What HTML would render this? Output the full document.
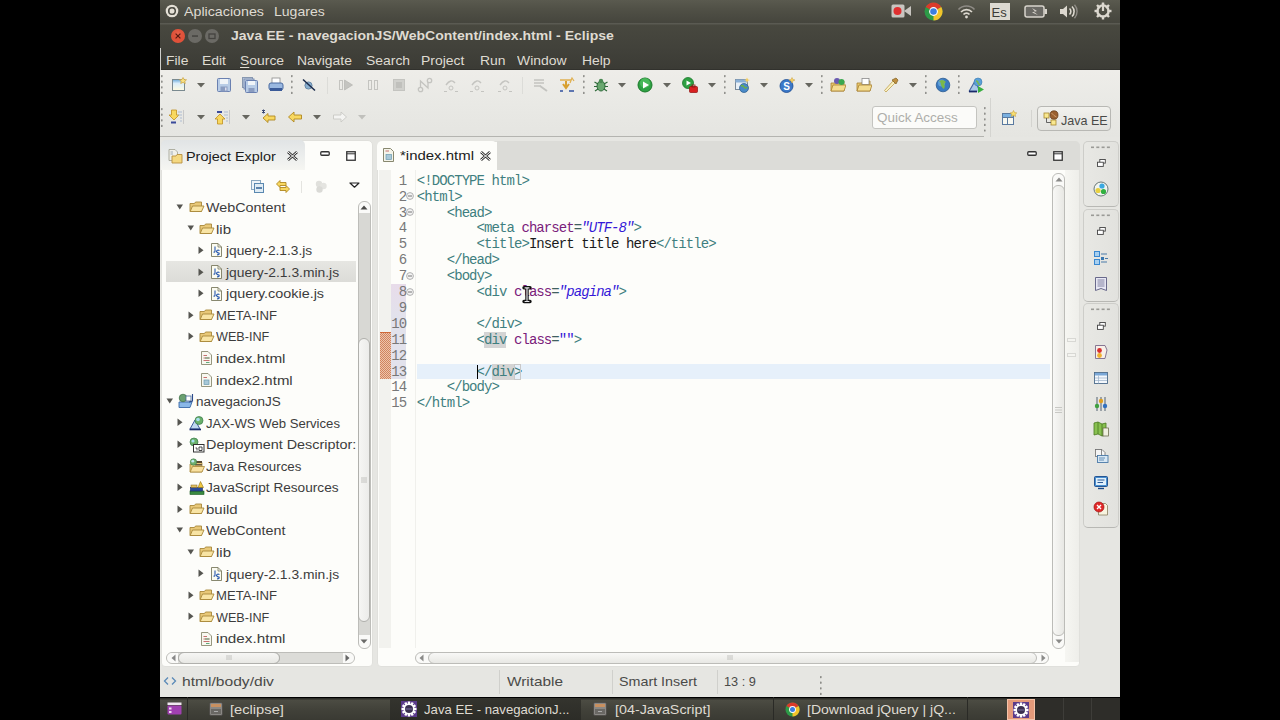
<!DOCTYPE html><html><head><meta charset="utf-8"><style>
*{margin:0;padding:0;box-sizing:border-box}
html,body{width:1280px;height:720px;overflow:hidden;background:#000;position:relative;font-family:"Liberation Sans",sans-serif}
.abs{position:absolute}
.t{position:absolute;white-space:pre;line-height:1}
#panel{left:160px;top:0;width:960px;height:23px;background:linear-gradient(#5a5a4f,#505046 40%,#45453d)}
#title{left:160px;top:23px;width:960px;height:46.5px;background:linear-gradient(#5a5a52 0,#5a5a52 1px,#48483f 2px,#42423b 50%,#3b3b35 97%,#2c2c28 100%)}
#menu{display:none}
#tb{left:160px;top:69.5px;width:960px;height:67px;background:linear-gradient(#eeede9,#e9e9e5 50%,#e5e5e1)}
#main{left:160px;top:137px;width:960px;height:560px;background:#e6e6e2}
#task{left:160px;top:697.5px;width:960px;height:22.5px;background:linear-gradient(#2e2e29 0,#2e2e29 1px,#4c4c43 2px,#42423a 50%,#3a3a33)}
.pt{color:#dfdbd2;font-size:13px}
.mt{color:#dfdbd2;font-size:13px}
.code{font-family:"Liberation Mono",monospace;font-size:14px;letter-spacing:-0.93px;color:#3f7f7f}
.ln{font-family:"Liberation Mono",monospace;font-size:14px;letter-spacing:-0.93px;color:#787878}
.tree{font-size:12.5px;color:#3c3c3c}
.st{font-size:13px;color:#4a4a48}
.tk{font-size:13px;color:#dfdbd2}
</style></head><body>
<div id="panel" class="abs"></div><div id="title" class="abs"></div><div id="menu" class="abs"></div>
<div id="tb" class="abs"></div><div id="main" class="abs"></div><div id="task" class="abs"></div>
<svg class="abs" style="left:165px;top:4.2px" width="14" height="14" viewBox="0 0 14 14"><circle cx="7" cy="7" r="6.3" fill="#e4e0d6"/><circle cx="7" cy="7" r="3.3" fill="none" stroke="#4a4a42" stroke-width="1.5"/><path d="M2.8 7 L4.4 6 L4.4 8 Z M9.3 3 L9.4 4.9 L7.9 4.1 Z M9.3 11 L7.9 9.9 L9.4 9.1 Z" fill="#4a4a42"/></svg>
<div class="t pt" style="left:184px;top:4.8px;transform:scaleX(1.095);transform-origin:0 0;">Aplicaciones</div>
<div class="t pt" style="left:273.5px;top:4.8px;transform:scaleX(1.08);transform-origin:0 0;">Lugares</div>
<svg class="abs" style="left:891px;top:4px" width="21" height="14" viewBox="0 0 21 14"><rect x="0.5" y="0.5" width="13" height="13" rx="1.5" fill="#c8c5c0"/><path d="M13 7 L20 2 L20 12 Z" fill="#c8c5c0"/><circle cx="6.5" cy="7" r="4" fill="#e03030"/></svg>
<svg class="abs" style="left:924px;top:2px" width="19" height="19" viewBox="0 0 19 19"><circle cx="9.5" cy="9.5" r="9" fill="#2d9a47"/><path d="M9.5 9.5 L1.7 5 A9 9 0 0 1 17.3 5 Z" fill="#db3a2b"/><path d="M9.5 9.5 L17.3 5 A9 9 0 0 1 9.5 18.5 Z" fill="#f2c32b"/><circle cx="9.5" cy="9.5" r="4.4" fill="#fff"/><circle cx="9.5" cy="9.5" r="3.3" fill="#3b7de0"/></svg>
<svg class="abs" style="left:957px;top:4px" width="19" height="15" viewBox="0 0 19 15"><path d="M1.5 5.5 A11 11 0 0 1 17.5 5.5" fill="none" stroke="#8e8b85" stroke-width="1.6"/><path d="M4 8 A7.5 7.5 0 0 1 15 8" fill="none" stroke="#dcd8cf" stroke-width="1.7"/><path d="M6.5 10.5 A4 4 0 0 1 12.5 10.5" fill="none" stroke="#dcd8cf" stroke-width="1.7"/><circle cx="9.5" cy="13" r="1.4" fill="#dcd8cf"/></svg>
<div class="abs" style="left:990px;top:3px;width:20px;height:17px;background:#dcd9d1"></div>
<div class="t " style="left:991.5px;top:5.5px;font-size:13px;color:#3c3b37">Es</div>
<svg class="abs" style="left:1024px;top:5px" width="24" height="13" viewBox="0 0 24 13"><rect x="1" y="1" width="19" height="11" rx="2" fill="#6a6964" stroke="#d8d4cc" stroke-width="1.5"/><rect x="20.5" y="4" width="2.5" height="5" fill="#d8d4cc"/><path d="M8 3 L13 6 L10 7 L14 10 L8 7.5 L11 6.5 Z" fill="#d8d4cc"/></svg>
<svg class="abs" style="left:1059px;top:4px" width="20" height="15" viewBox="0 0 20 15"><path d="M1 5 L4 5 L8 1.5 L8 13.5 L4 10 L1 10 Z" fill="#dcd8cf"/><path d="M10.5 4.5 A4 4 0 0 1 10.5 10.5" fill="none" stroke="#dcd8cf" stroke-width="1.6"/><path d="M13 2.5 A7 7 0 0 1 13 12.5" fill="none" stroke="#dcd8cf" stroke-width="1.6"/><path d="M15.5 0.8 A10 10 0 0 1 15.5 14.2" fill="none" stroke="#8e8b85" stroke-width="1.4"/></svg>
<svg class="abs" style="left:1094px;top:2px" width="18" height="18" viewBox="0 0 18 18"><rect x="7.8" y="0.5" width="2.4" height="4" fill="#dcd8cf" transform="rotate(0 9 9)"/><rect x="7.8" y="0.5" width="2.4" height="4" fill="#dcd8cf" transform="rotate(45 9 9)"/><rect x="7.8" y="0.5" width="2.4" height="4" fill="#dcd8cf" transform="rotate(90 9 9)"/><rect x="7.8" y="0.5" width="2.4" height="4" fill="#dcd8cf" transform="rotate(135 9 9)"/><rect x="7.8" y="0.5" width="2.4" height="4" fill="#dcd8cf" transform="rotate(180 9 9)"/><rect x="7.8" y="0.5" width="2.4" height="4" fill="#dcd8cf" transform="rotate(225 9 9)"/><rect x="7.8" y="0.5" width="2.4" height="4" fill="#dcd8cf" transform="rotate(270 9 9)"/><rect x="7.8" y="0.5" width="2.4" height="4" fill="#dcd8cf" transform="rotate(315 9 9)"/><circle cx="9" cy="9" r="5.6" fill="none" stroke="#dcd8cf" stroke-width="2.4"/><rect x="7.9" y="1" width="2.2" height="8" fill="#dcd8cf"/></svg>
<svg class="abs" style="left:170px;top:28px" width="50" height="16" viewBox="0 0 50 16"><circle cx="8" cy="8" r="7" fill="#e2523a"/><circle cx="8" cy="8" r="7" fill="url(#cg)"/><path d="M5.6 5.6 L10.4 10.4 M10.4 5.6 L5.6 10.4" stroke="#5a1a10" stroke-width="1.2"/><circle cx="25" cy="8" r="7" fill="#6b6a65"/><rect x="22" y="7.3" width="6" height="1.5" fill="#44433f"/><circle cx="42" cy="8" r="7" fill="#6b6a65"/><rect x="39" y="6" width="6" height="4.5" fill="none" stroke="#44433f" stroke-width="1.3"/><defs><radialGradient id="cg" cx="0.5" cy="0.35" r="0.6"><stop offset="0" stop-color="#f07058" stop-opacity="0.6"/><stop offset="1" stop-color="#c84028" stop-opacity="0"/></radialGradient></defs></svg>
<div class="t pt" style="left:231px;top:29.2px;transform:scaleX(1.08);transform-origin:0 0;font-weight:bold;color:#dfdbd2">Java EE - navegacionJS/WebContent/index.html - Eclipse</div>
<div class="t mt" style="left:166px;top:53.8px;transform:scaleX(1.07);transform-origin:0 0;">File</div>
<div class="t mt" style="left:201.5px;top:53.8px;transform:scaleX(1.07);transform-origin:0 0;">Edit</div>
<div class="t mt" style="left:239.5px;top:53.8px;transform:scaleX(1.07);transform-origin:0 0;"><u style="text-underline-offset:2px">S</u>ource</div>
<div class="t mt" style="left:296.5px;top:53.8px;transform:scaleX(1.07);transform-origin:0 0;">Navigate</div>
<div class="t mt" style="left:365.5px;top:53.8px;transform:scaleX(1.07);transform-origin:0 0;">Search</div>
<div class="t mt" style="left:420.5px;top:53.8px;transform:scaleX(1.07);transform-origin:0 0;">Project</div>
<div class="t mt" style="left:479.5px;top:53.8px;transform:scaleX(1.07);transform-origin:0 0;">Run</div>
<div class="t mt" style="left:516.5px;top:53.8px;transform:scaleX(1.07);transform-origin:0 0;">Window</div>
<div class="t mt" style="left:581.5px;top:53.8px;transform:scaleX(1.07);transform-origin:0 0;">Help</div>
<div class="abs" style="left:160px;top:48px;width:1px;height:22px;background:#cfcfcb"></div>
<svg class="abs" style="left:161.2px;top:75.3px" width="2" height="19" viewBox="0 0 2 19"><rect x="0" y="0.0" width="1.6" height="2.2" rx="0.6" fill="#8e8e8a"/><rect x="0" y="5.6" width="1.6" height="2.2" rx="0.6" fill="#8e8e8a"/><rect x="0" y="11.2" width="1.6" height="2.2" rx="0.6" fill="#8e8e8a"/><rect x="0" y="16.8" width="1.6" height="2.2" rx="0.6" fill="#8e8e8a"/></svg>
<svg class="abs" style="left:161.2px;top:107.8px" width="2" height="19" viewBox="0 0 2 19"><rect x="0" y="0.0" width="1.6" height="2.2" rx="0.6" fill="#8e8e8a"/><rect x="0" y="5.6" width="1.6" height="2.2" rx="0.6" fill="#8e8e8a"/><rect x="0" y="11.2" width="1.6" height="2.2" rx="0.6" fill="#8e8e8a"/><rect x="0" y="16.8" width="1.6" height="2.2" rx="0.6" fill="#8e8e8a"/></svg>
<svg class="abs" style="left:171px;top:77px" width="16" height="16" viewBox="0 0 16 16"><defs><linearGradient id="nw" x1="0" y1="0" x2="0" y2="1"><stop offset="0" stop-color="#6aa8d8"/><stop offset="0.35" stop-color="#dbeefa"/><stop offset="1" stop-color="#fffbe0"/></linearGradient></defs><rect x="1.5" y="2.5" width="12" height="11" fill="url(#nw)" stroke="#7a8a90"/><path d="M12 0.5 L13.2 2.6 L15.5 2.8 L13.8 4.3 L14.3 6.5 L12 5.4 L9.7 6.5 L10.2 4.3 L8.5 2.8 L10.8 2.6 Z" fill="#f8e080" stroke="#c8a040" stroke-width="0.7"/></svg>
<svg class="abs" style="left:196.5px;top:83px" width="8" height="5" viewBox="0 0 8 5"><path d="M0 0 L8 0 L4 4.5 Z" fill="#66665f"/></svg>
<svg class="abs" style="left:216px;top:77px" width="16" height="16" viewBox="0 0 16 16"><rect x="1.5" y="1.5" width="13" height="13" rx="1" fill="#b8cce6" stroke="#6a80b0"/><rect x="4" y="2" width="8" height="5" fill="#f0f4f8"/><rect x="4.5" y="9.5" width="7" height="5" fill="#8a9cc0"/><rect x="9" y="10.5" width="1.5" height="3" fill="#dde"/></svg>
<svg class="abs" style="left:242px;top:77px" width="16" height="16" viewBox="0 0 16 16"><rect x="0.5" y="0.5" width="10" height="10" fill="#c8d4e4" stroke="#8898b0"/><rect x="2" y="2" width="10" height="10" fill="#c0d0e4" stroke="#7a8cb0"/><rect x="3.5" y="3.5" width="12" height="12" rx="1" fill="#b8cce6" stroke="#6a80b0"/><rect x="6" y="4" width="7" height="4" fill="#f0f4f8"/><rect x="6.5" y="11" width="6" height="4" fill="#8a9cc0"/></svg>
<svg class="abs" style="left:268px;top:77px" width="16" height="16" viewBox="0 0 16 16"><rect x="4" y="1" width="8" height="6" fill="#fff" stroke="#8a8a8a" stroke-width="0.8"/><rect x="1" y="6" width="14" height="7" rx="2" fill="#9ab8e0" stroke="#4a6aa0"/><rect x="2" y="11" width="12" height="3" fill="#3a5a98"/></svg>
<svg class="abs" style="left:291.2px;top:75.3px" width="2" height="19" viewBox="0 0 2 19"><rect x="0" y="0.0" width="1.6" height="2.2" rx="0.6" fill="#8e8e8a"/><rect x="0" y="5.6" width="1.6" height="2.2" rx="0.6" fill="#8e8e8a"/><rect x="0" y="11.2" width="1.6" height="2.2" rx="0.6" fill="#8e8e8a"/><rect x="0" y="16.8" width="1.6" height="2.2" rx="0.6" fill="#8e8e8a"/></svg>
<svg class="abs" style="left:301px;top:77px" width="16" height="16" viewBox="0 0 16 16"><circle cx="7.5" cy="8.5" r="3.6" fill="#8ab0d0" stroke="#5a7a9a" stroke-width="0.8"/><path d="M2 2.5 L14 13.5" stroke="#1a2a4a" stroke-width="1.5"/></svg>
<div class="abs" style="left:327px;top:77px;width:1px;height:17px;background:#dcdcd8"></div>
<svg class="abs" style="left:338px;top:77px" width="16" height="16" viewBox="0 0 16 16"><rect x="1.5" y="3.5" width="3" height="9" fill="none" stroke="#c4c4c0"/><path d="M6.5 3 L14.5 8 L6.5 13 Z" fill="#c4c4c0" stroke="#b4b4b0" stroke-width="0.7"/></svg>
<svg class="abs" style="left:365px;top:77px" width="16" height="16" viewBox="0 0 16 16"><rect x="3.5" y="3.5" width="3" height="9" fill="none" stroke="#c4c4c0"/><rect x="9.5" y="3.5" width="3" height="9" fill="none" stroke="#c4c4c0"/></svg>
<svg class="abs" style="left:391px;top:77px" width="16" height="16" viewBox="0 0 16 16"><rect x="2.5" y="2.5" width="11" height="11" fill="#d0d0cc" stroke="#c4c4c0"/><rect x="5" y="5" width="6" height="6" fill="#c0c0bc"/></svg>
<svg class="abs" style="left:417px;top:77px" width="16" height="16" viewBox="0 0 16 16"><circle cx="3.5" cy="12.5" r="2.2" fill="none" stroke="#c4c4c0" stroke-width="1.3"/><circle cx="12.5" cy="3.5" r="2.2" fill="none" stroke="#c4c4c0" stroke-width="1.3"/><path d="M3.5 10 L3.5 4 L11 11 L11 5" fill="none" stroke="#c4c4c0" stroke-width="1.3"/></svg>
<svg class="abs" style="left:443px;top:77px" width="16" height="16" viewBox="0 0 16 16"><path d="M3 8 Q8 1 12 6" fill="none" stroke="#c4c4c0" stroke-width="1.4"/><circle cx="8" cy="11" r="2" fill="none" stroke="#c4c4c0"/><path d="M1 14.5 L4 14.5 M12 14.5 L15 14.5" stroke="#c4c4c0" stroke-width="1.2"/></svg>
<svg class="abs" style="left:469px;top:77px" width="16" height="16" viewBox="0 0 16 16"><path d="M3 8 Q8 1 12 6" fill="none" stroke="#c4c4c0" stroke-width="1.4"/><circle cx="8" cy="11" r="2" fill="none" stroke="#c4c4c0"/><path d="M1 14.5 L4 14.5 M12 14.5 L15 14.5" stroke="#c4c4c0" stroke-width="1.2"/></svg>
<svg class="abs" style="left:497px;top:77px" width="16" height="16" viewBox="0 0 16 16"><path d="M3 8 Q8 1 12 6" fill="none" stroke="#c4c4c0" stroke-width="1.4"/><circle cx="8" cy="11" r="2" fill="none" stroke="#c4c4c0"/><path d="M1 14.5 L4 14.5 M12 14.5 L15 14.5" stroke="#c4c4c0" stroke-width="1.2"/></svg>
<div class="abs" style="left:522px;top:77px;width:1px;height:17px;background:#dcdcd8"></div>
<svg class="abs" style="left:533px;top:77px" width="16" height="16" viewBox="0 0 16 16"><path d="M1 3 L11 3 M1 6 L11 6 M1 9 L8 9" stroke="#c4c4c0" stroke-width="1.6"/><path d="M7 9 L14 14" stroke="#c4c4c0" stroke-width="2"/></svg>
<svg class="abs" style="left:559px;top:77px" width="16" height="16" viewBox="0 0 16 16"><path d="M1 3 L12 3" stroke="#e0b050" stroke-width="1.5"/><path d="M7 4 L7 10 M4 7 L7 11 L10 7" stroke="#d8a030" stroke-width="2" fill="none"/><path d="M11 6 L13 1 L15 4" stroke="#e0b050" stroke-width="1.2" fill="none"/><path d="M1 14 L4 14 M10 14 L15 14" stroke="#3050a0" stroke-width="1.6"/></svg>
<svg class="abs" style="left:583.2px;top:75.3px" width="2" height="19" viewBox="0 0 2 19"><rect x="0" y="0.0" width="1.6" height="2.2" rx="0.6" fill="#8e8e8a"/><rect x="0" y="5.6" width="1.6" height="2.2" rx="0.6" fill="#8e8e8a"/><rect x="0" y="11.2" width="1.6" height="2.2" rx="0.6" fill="#8e8e8a"/><rect x="0" y="16.8" width="1.6" height="2.2" rx="0.6" fill="#8e8e8a"/></svg>
<svg class="abs" style="left:593px;top:77px" width="16" height="16" viewBox="0 0 16 16"><ellipse cx="8" cy="9" rx="4" ry="5" fill="#6aa870" stroke="#2e6a3a"/><circle cx="8" cy="4" r="2.2" fill="#4a8a54"/><path d="M1.5 5 L5 7 M14.5 5 L11 7 M1 9.5 L4 9.5 M15 9.5 L12 9.5 M2 14 L5 12 M14 14 L11 12" stroke="#2e6a3a" stroke-width="1.2"/></svg>
<svg class="abs" style="left:618px;top:83px" width="8" height="5" viewBox="0 0 8 5"><path d="M0 0 L8 0 L4 4.5 Z" fill="#66665f"/></svg>
<svg class="abs" style="left:637px;top:77px" width="16" height="16" viewBox="0 0 16 16"><circle cx="8" cy="8" r="7" fill="#2ea043" stroke="#1a7a2a"/><circle cx="8" cy="6" r="5" fill="#5ac86a" opacity="0.6"/><path d="M6 4.5 L12 8 L6 11.5 Z" fill="#fff"/></svg>
<svg class="abs" style="left:663px;top:83px" width="8" height="5" viewBox="0 0 8 5"><path d="M0 0 L8 0 L4 4.5 Z" fill="#66665f"/></svg>
<svg class="abs" style="left:682px;top:77px" width="16" height="16" viewBox="0 0 16 16"><circle cx="6" cy="6" r="5.5" fill="#2ea043" stroke="#1a7a2a" stroke-width="0.8"/><path d="M4.5 3.5 L9 6 L4.5 8.5 Z" fill="#fff"/><rect x="7.5" y="9.5" width="8" height="6" rx="1" fill="#d82020" stroke="#901010" stroke-width="0.7"/><rect x="10" y="8" width="3" height="2" fill="none" stroke="#901010" stroke-width="0.8"/></svg>
<svg class="abs" style="left:708px;top:83px" width="8" height="5" viewBox="0 0 8 5"><path d="M0 0 L8 0 L4 4.5 Z" fill="#66665f"/></svg>
<svg class="abs" style="left:724.2px;top:75.3px" width="2" height="19" viewBox="0 0 2 19"><rect x="0" y="0.0" width="1.6" height="2.2" rx="0.6" fill="#8e8e8a"/><rect x="0" y="5.6" width="1.6" height="2.2" rx="0.6" fill="#8e8e8a"/><rect x="0" y="11.2" width="1.6" height="2.2" rx="0.6" fill="#8e8e8a"/><rect x="0" y="16.8" width="1.6" height="2.2" rx="0.6" fill="#8e8e8a"/></svg>
<svg class="abs" style="left:734px;top:77px" width="16" height="16" viewBox="0 0 16 16"><rect x="1.5" y="2.5" width="12" height="10" fill="#e8f0f8" stroke="#7a8a9a"/><rect x="1.5" y="2.5" width="12" height="3" fill="#8ab0d8"/><circle cx="10" cy="11" r="4.5" fill="#4a8ac8" stroke="#2a5a8a" stroke-width="0.7"/><path d="M7 9 Q9 8 10 10 Q12 12 13 10" stroke="#6ab04a" stroke-width="1.6" fill="none"/><path d="M13 0.5 L14 2.5 L16 3 L14 3.8 L13 6 L12 3.8 L10 3 L12 2.5 Z" fill="#f8d060"/></svg>
<svg class="abs" style="left:759.6px;top:83px" width="8" height="5" viewBox="0 0 8 5"><path d="M0 0 L8 0 L4 4.5 Z" fill="#66665f"/></svg>
<svg class="abs" style="left:779px;top:77px" width="16" height="16" viewBox="0 0 16 16"><circle cx="7.5" cy="9" r="6.5" fill="#3a78c8" stroke="#1a4a90" stroke-width="0.8"/><text x="7.5" y="13" font-family="Liberation Sans" font-weight="bold" font-size="10" fill="#fff" text-anchor="middle">S</text><path d="M13 0.5 L14 2.5 L16 3 L14 3.8 L13 6 L12 3.8 L10 3 L12 2.5 Z" fill="#f8d060" stroke="#c8a040" stroke-width="0.5"/></svg>
<svg class="abs" style="left:805px;top:83px" width="8" height="5" viewBox="0 0 8 5"><path d="M0 0 L8 0 L4 4.5 Z" fill="#66665f"/></svg>
<svg class="abs" style="left:821.2px;top:75.3px" width="2" height="19" viewBox="0 0 2 19"><rect x="0" y="0.0" width="1.6" height="2.2" rx="0.6" fill="#8e8e8a"/><rect x="0" y="5.6" width="1.6" height="2.2" rx="0.6" fill="#8e8e8a"/><rect x="0" y="11.2" width="1.6" height="2.2" rx="0.6" fill="#8e8e8a"/><rect x="0" y="16.8" width="1.6" height="2.2" rx="0.6" fill="#8e8e8a"/></svg>
<svg class="abs" style="left:830px;top:77px" width="16" height="16" viewBox="0 0 16 16"><path d="M1 6 L6 6 L7 4 L14 4 L14 14 L1 14 Z" fill="#e8c870" stroke="#a88030" stroke-width="0.8"/><path d="M1 14 L3 8 L16 8 L14 14 Z" fill="#f4dc90" stroke="#a88030" stroke-width="0.8"/><circle cx="7" cy="4" r="3" fill="#6a5ab0"/><circle cx="11.5" cy="5" r="3" fill="#3aa850"/></svg>
<svg class="abs" style="left:856px;top:77px" width="16" height="16" viewBox="0 0 16 16"><path d="M1 6 L6 6 L7 4 L14 4 L14 14 L1 14 Z" fill="#e8c870" stroke="#a88030" stroke-width="0.8"/><rect x="6" y="1.5" width="7" height="6" fill="#fff" stroke="#8a8a8a" stroke-width="0.8"/><path d="M1 14 L3 8 L16 8 L14 14 Z" fill="#f4dc90" stroke="#a88030" stroke-width="0.8"/></svg>
<svg class="abs" style="left:883px;top:77px" width="16" height="16" viewBox="0 0 16 16"><path d="M3 15 L1.5 13.5 L10 4 L12 6 Z" fill="#f8f0c0" stroke="#c0a050" stroke-width="0.8"/><path d="M9 3 L13 1 L15 3 L13 7 Z" fill="#c09040" stroke="#806020" stroke-width="0.7"/></svg>
<svg class="abs" style="left:909px;top:83px" width="8" height="5" viewBox="0 0 8 5"><path d="M0 0 L8 0 L4 4.5 Z" fill="#66665f"/></svg>
<svg class="abs" style="left:925.2px;top:75.3px" width="2" height="19" viewBox="0 0 2 19"><rect x="0" y="0.0" width="1.6" height="2.2" rx="0.6" fill="#8e8e8a"/><rect x="0" y="5.6" width="1.6" height="2.2" rx="0.6" fill="#8e8e8a"/><rect x="0" y="11.2" width="1.6" height="2.2" rx="0.6" fill="#8e8e8a"/><rect x="0" y="16.8" width="1.6" height="2.2" rx="0.6" fill="#8e8e8a"/></svg>
<svg class="abs" style="left:935px;top:77px" width="16" height="16" viewBox="0 0 16 16"><circle cx="8" cy="8" r="6.8" fill="#3a7ac0" stroke="#2a5a90" stroke-width="0.8"/><circle cx="6.5" cy="6" r="3.5" fill="#8ac8f0" opacity="0.5"/><path d="M4 4 Q6 5 6 8 Q7 11 9 12 L10 9 Q8 7 11 5 Q9 3 7 3" fill="#7ab84a"/></svg>
<svg class="abs" style="left:958.2px;top:75.3px" width="2" height="19" viewBox="0 0 2 19"><rect x="0" y="0.0" width="1.6" height="2.2" rx="0.6" fill="#8e8e8a"/><rect x="0" y="5.6" width="1.6" height="2.2" rx="0.6" fill="#8e8e8a"/><rect x="0" y="11.2" width="1.6" height="2.2" rx="0.6" fill="#8e8e8a"/><rect x="0" y="16.8" width="1.6" height="2.2" rx="0.6" fill="#8e8e8a"/></svg>
<svg class="abs" style="left:968px;top:77px" width="16" height="16" viewBox="0 0 16 16"><path d="M1 14.5 L7 4 L12 14.5" fill="#a8c8e8" stroke="#4a6aa0" stroke-width="1.2"/><path d="M1 14.5 L9 14.5" stroke="#1a2a6a" stroke-width="1.8"/><circle cx="10" cy="5" r="4" fill="#5aa0d8" stroke="#3a7ab0" stroke-width="0.6"/><path d="M8 4 Q10 4 10 6 Q11 8 12 7" stroke="#7ab84a" stroke-width="1.4" fill="none"/><path d="M10 9 L16 12.5 L10 16 Z" fill="#3ab040"/></svg>
<svg class="abs" style="left:168px;top:109px" width="16" height="16" viewBox="0 0 16 16"><path d="M3.5 1 L8.5 1 L8.5 6 L11 6 L6 11 L1 6 L3.5 6 Z" fill="#f8d860" stroke="#c09020" stroke-width="0.8"/><path d="M10 3 L14 3 M10 6 L14 6 M12 9 L14 9 M12 12 L14 12" stroke="#a8b8d0" stroke-width="0.9"/><rect x="3" y="12.5" width="5" height="2" fill="#3a4a9a"/><path d="M15.5 1 L15.5 15" stroke="#c8c8c8"/></svg>
<svg class="abs" style="left:196.5px;top:115px" width="8" height="5" viewBox="0 0 8 5"><path d="M0 0 L8 0 L4 4.5 Z" fill="#66665f"/></svg>
<svg class="abs" style="left:214px;top:109px" width="16" height="16" viewBox="0 0 16 16"><path d="M3.5 15 L8.5 15 L8.5 10 L11 10 L6 5 L1 10 L3.5 10 Z" fill="#f8d860" stroke="#c09020" stroke-width="0.8"/><path d="M10 3 L14 3 M10 6 L14 6 M12 9 L14 9 M12 12 L14 12" stroke="#a8b8d0" stroke-width="0.9"/><rect x="3" y="2" width="5" height="2" fill="#3a4a9a"/><path d="M15.5 1 L15.5 15" stroke="#c8c8c8"/></svg>
<svg class="abs" style="left:241.75px;top:115px" width="8" height="5" viewBox="0 0 8 5"><path d="M0 0 L8 0 L4 4.5 Z" fill="#66665f"/></svg>
<svg class="abs" style="left:261px;top:109px" width="16" height="16" viewBox="0 0 16 16"><path d="M2 9 L7 4.5 L7 7 L14 7 L14 11 L7 11 L7 13.5 Z" fill="#f8d860" stroke="#b08820" stroke-width="0.9"/><path d="M1 1 L4 4 M4 1 L1 4 M2.5 0.5 L2.5 4.5" stroke="#2a3a6a" stroke-width="0.9"/></svg>
<svg class="abs" style="left:287px;top:109px" width="16" height="16" viewBox="0 0 16 16"><path d="M1.5 8 L7 3 L7 6 L14.5 6 L14.5 10 L7 10 L7 13 Z" fill="#f8d860" stroke="#b08820" stroke-width="0.9"/></svg>
<svg class="abs" style="left:313px;top:115px" width="8" height="5" viewBox="0 0 8 5"><path d="M0 0 L8 0 L4 4.5 Z" fill="#66665f"/></svg>
<svg class="abs" style="left:332px;top:109px" width="16" height="16" viewBox="0 0 16 16"><path d="M14.5 8 L9 3 L9 6 L1.5 6 L1.5 10 L9 10 L9 13 Z" fill="#f4f4f2" stroke="#c8c8c4" stroke-width="0.9"/></svg>
<svg class="abs" style="left:358px;top:115px" width="8" height="5" viewBox="0 0 8 5"><path d="M0 0 L8 0 L4 4.5 Z" fill="#c0c0bc"/></svg>
<div class="abs" style="left:872px;top:106px;width:105px;height:23px;background:#fbfbf9;border:1px solid #c4c4c0;border-radius:3px"></div>
<div class="t " style="left:876.5px;top:111px;transform:scaleX(1.035);transform-origin:0 0;font-size:13px;color:#aeaeaa">Quick Access</div>
<div class="abs" style="left:160px;top:136px;width:824px;height:1px;background:#b4b4b0"></div>
<svg class="abs" style="left:984.2px;top:106.5px" width="2" height="25" viewBox="0 0 2 25"><rect x="0" y="0.0" width="1.6" height="2.2" rx="0.6" fill="#8e8e8a"/><rect x="0" y="5.6" width="1.6" height="2.2" rx="0.6" fill="#8e8e8a"/><rect x="0" y="11.2" width="1.6" height="2.2" rx="0.6" fill="#8e8e8a"/><rect x="0" y="16.8" width="1.6" height="2.2" rx="0.6" fill="#8e8e8a"/><rect x="0" y="22.4" width="1.6" height="2.2" rx="0.6" fill="#8e8e8a"/></svg>
<div class="abs" style="left:990px;top:98px;width:1px;height:39px;background:#d4d4d0"></div>
<svg class="abs" style="left:1001px;top:110px" width="16" height="16" viewBox="0 0 16 16"><rect x="1.5" y="3.5" width="11" height="11" fill="#f8f8f0" stroke="#5a7aa0"/><path d="M1.5 7.5 L12.5 7.5 M6.5 7.5 L6.5 14.5" stroke="#5a7aa0"/><rect x="2" y="4" width="10" height="3" fill="#7ab0e0"/><path d="M12.5 0.5 L13.6 2.6 L15.8 2.9 L14.2 4.3 L14.6 6.5 L12.5 5.4 L10.4 6.5 L10.8 4.3 L9.2 2.9 L11.4 2.6 Z" fill="#f8e070" stroke="#c8a040" stroke-width="0.6"/></svg>
<div class="abs" style="left:1030.6px;top:110px;width:1px;height:17px;background:#d4d4d0"></div>
<div class="abs" style="left:1037px;top:106px;width:73.5px;height:24.7px;background:linear-gradient(#f2f2ee,#e2e2de);border:1px solid #b8b8b4;border-radius:4px"></div>
<svg class="abs" style="left:1043px;top:110px" width="16" height="16" viewBox="0 0 16 16"><rect x="1" y="3" width="5" height="5" fill="#f8e890" stroke="#a88830" stroke-width="0.8"/><rect x="8" y="10" width="5" height="5" fill="#f8e890" stroke="#a88830" stroke-width="0.8"/><path d="M3.5 8 L3.5 12.5 L8 12.5" stroke="#555" stroke-width="0.9" fill="none"/><ellipse cx="11" cy="5" rx="4" ry="4.2" fill="#9a6030" stroke="#603818" stroke-width="0.7"/><path d="M8.5 3 Q11 6 13.5 7" stroke="#d8a878" stroke-width="0.8" fill="none"/></svg>
<div class="t " style="left:1061px;top:113.8px;transform:scaleX(0.965);transform-origin:0 0;font-size:13px;color:#4a4a48">Java EE</div>
<div class="abs" style="left:161px;top:140px;width:212px;height:526.5px;background:#fdfdfa;border:1px solid #e0e0dc;border-radius:5px 5px 4px 4px"></div>
<div class="abs" style="left:161px;top:140px;width:143.5px;height:30px;background:linear-gradient(#e1e4e5,#eceeed 55%,#f6f6f2);border-radius:5px 5px 0 0"></div>
<svg class="abs" style="left:167px;top:148px" width="16" height="16" viewBox="0 0 16 16"><path d="M2 1.5 L8 1.5 L10.5 4 L10.5 12.5 L2 12.5 Z" fill="#f0f0ea" stroke="#a0a090" stroke-width="0.8"/><path d="M3.5 4 L6 4 M3.5 6 L6 6" stroke="#8090a0" stroke-width="0.7"/><path d="M5 8 L9 8 L10 6.5 L15 6.5 L15 15 L5 15 Z" fill="#f4d880" stroke="#b89040" stroke-width="0.9"/></svg>
<div class="t " style="left:185.8px;top:149.6px;transform:scaleX(1.11);transform-origin:0 0;font-size:13px;color:#1c1c1c">Project Explor</div>
<svg class="abs" style="left:287px;top:151px" width="11" height="10" viewBox="0 0 11 10"><path d="M1 1 L10 9 M10 1 L1 9" stroke="#333" stroke-width="2.6"/><path d="M1 1 L10 9 M10 1 L1 9" stroke="#fff" stroke-width="1"/></svg>
<svg class="abs" style="left:320px;top:150.5px" width="10" height="5" viewBox="0 0 10 5"><rect x="0.75" y="0.75" width="8.5" height="3.5" rx="1" fill="#fff" stroke="#333" stroke-width="1.3"/></svg>
<svg class="abs" style="left:346px;top:150.5px" width="10" height="10" viewBox="0 0 10 10"><rect x="0.75" y="0.75" width="8.5" height="8.5" fill="#fff" stroke="#333" stroke-width="1.3"/><path d="M1 2.8 L9 2.8" stroke="#333" stroke-width="1"/></svg>
<svg class="abs" style="left:250px;top:179px" width="15" height="15" viewBox="0 0 15 15"><rect x="1.5" y="1.5" width="9" height="9" fill="#eef4f8" stroke="#8aa8c0"/><rect x="4.5" y="4.5" width="9" height="9" fill="#e0ecf4" stroke="#5a88b0"/><path d="M6 9 L12 9" stroke="#3a6a9a" stroke-width="1.6"/></svg>
<svg class="abs" style="left:275px;top:179px" width="16" height="15" viewBox="0 0 16 15"><path d="M1.5 5 L5 1.5 L5 3.5 L11 3.5 L11 6.5 L5 6.5 L5 8.5 Z" fill="#f8d860" stroke="#b08820" stroke-width="0.9"/><path d="M14.5 10 L11 6.5 L11 8.5 L5 8.5 L5 11.5 L11 11.5 L11 13.5 Z" fill="#f8d860" stroke="#b08820" stroke-width="0.9"/></svg>
<div class="abs" style="left:301px;top:181px;width:1px;height:12px;background:#e4e4e0"></div>
<svg class="abs" style="left:313px;top:179px" width="15" height="15" viewBox="0 0 15 15"><circle cx="6" cy="5" r="3.2" fill="#e0e0dc"/><circle cx="10.5" cy="7" r="3.2" fill="#e4e4e0"/><circle cx="6.5" cy="10.5" r="3.2" fill="#dadad6"/></svg>
<svg class="abs" style="left:348.5px;top:181.5px" width="11" height="6" viewBox="0 0 11 6"><path d="M1 1 L10 1 L5.5 5.2 Z" fill="#fff" stroke="#222" stroke-width="1.2" stroke-linejoin="round"/></svg>
<div class="abs" style="left:165.5px;top:260.5px;width:190px;height:21px;background:linear-gradient(#e6e6e2,#dcdcd8)"></div>
<div class="abs" style="left:162px;top:196px;width:194px;height:455px;overflow:hidden">
<svg class="abs" style="left:14.3px;top:7.8px" width="8" height="6"><path d="M0.5 0.5 L7 0.5 L3.75 5.5 Z" fill="#555550"/></svg>
<svg class="abs" style="left:26.5px;top:3.3px" width="16" height="16"><path d="M1 4.5 L5.5 4.5 L6.5 3 L12.5 3 L12.5 12.5 L1 12.5 Z" fill="#e8c878" stroke="#a8883a" stroke-width="0.9"/><path d="M1.2 12.5 L3.5 7 L15 7 L12.5 12.5 Z" fill="#f8e4a4" stroke="#a8883a" stroke-width="0.9"/></svg>
<div class="t tree" style="left:43.8px;top:6.0px;transform:scaleX(1.146);transform-origin:0 0">WebContent</div>
<svg class="abs" style="left:24.6px;top:29.4px" width="8" height="6"><path d="M0.5 0.5 L7 0.5 L3.75 5.5 Z" fill="#555550"/></svg>
<svg class="abs" style="left:36.8px;top:24.9px" width="16" height="16"><path d="M1 4.5 L5.5 4.5 L6.5 3 L12.5 3 L12.5 12.5 L1 12.5 Z" fill="#e8c878" stroke="#a8883a" stroke-width="0.9"/><path d="M1.2 12.5 L3.5 7 L15 7 L12.5 12.5 Z" fill="#f8e4a4" stroke="#a8883a" stroke-width="0.9"/></svg>
<div class="t tree" style="left:54.1px;top:27.6px;transform:scaleX(1.2);transform-origin:0 0">lib</div>
<svg class="abs" style="left:35.9px;top:49.9px" width="6" height="9"><path d="M0.5 0.5 L5.5 4.25 L0.5 8 Z" fill="#555550"/></svg>
<svg class="abs" style="left:47.1px;top:46.4px" width="16" height="16"><path d="M2.5 1.5 L9 1.5 L12.5 5 L12.5 14.5 L2.5 14.5 Z" fill="#fbfbf0" stroke="#7a7a60" stroke-width="0.9"/><path d="M9 1.5 L9 5 L12.5 5" fill="none" stroke="#7a7a60" stroke-width="0.8"/><path d="M6 4.5 L6 9 Q6 10.5 4.5 10" stroke="#2a5ab0" stroke-width="1.1" fill="none"/><path d="M10.5 8.5 Q8 7.5 7.5 9.5 Q8 11 10 11 Q11 12.5 8 13" stroke="#2a5ab0" stroke-width="1.1" fill="none"/></svg>
<div class="t tree" style="left:64.4px;top:49.1px;transform:scaleX(1.097);transform-origin:0 0">jquery-2.1.3.js</div>
<svg class="abs" style="left:35.9px;top:71.5px" width="6" height="9"><path d="M0.5 0.5 L5.5 4.25 L0.5 8 Z" fill="#555550"/></svg>
<svg class="abs" style="left:47.1px;top:68.0px" width="16" height="16"><path d="M2.5 1.5 L9 1.5 L12.5 5 L12.5 14.5 L2.5 14.5 Z" fill="#fbfbf0" stroke="#7a7a60" stroke-width="0.9"/><path d="M9 1.5 L9 5 L12.5 5" fill="none" stroke="#7a7a60" stroke-width="0.8"/><path d="M6 4.5 L6 9 Q6 10.5 4.5 10" stroke="#2a5ab0" stroke-width="1.1" fill="none"/><path d="M10.5 8.5 Q8 7.5 7.5 9.5 Q8 11 10 11 Q11 12.5 8 13" stroke="#2a5ab0" stroke-width="1.1" fill="none"/></svg>
<div class="t tree" style="left:64.4px;top:70.7px;transform:scaleX(1.107);transform-origin:0 0">jquery-2.1.3.min.js</div>
<svg class="abs" style="left:35.9px;top:93.0px" width="6" height="9"><path d="M0.5 0.5 L5.5 4.25 L0.5 8 Z" fill="#555550"/></svg>
<svg class="abs" style="left:47.1px;top:89.5px" width="16" height="16"><path d="M2.5 1.5 L9 1.5 L12.5 5 L12.5 14.5 L2.5 14.5 Z" fill="#fbfbf0" stroke="#7a7a60" stroke-width="0.9"/><path d="M9 1.5 L9 5 L12.5 5" fill="none" stroke="#7a7a60" stroke-width="0.8"/><path d="M6 4.5 L6 9 Q6 10.5 4.5 10" stroke="#2a5ab0" stroke-width="1.1" fill="none"/><path d="M10.5 8.5 Q8 7.5 7.5 9.5 Q8 11 10 11 Q11 12.5 8 13" stroke="#2a5ab0" stroke-width="1.1" fill="none"/></svg>
<div class="t tree" style="left:64.4px;top:92.2px;transform:scaleX(1.15);transform-origin:0 0">jquery.cookie.js</div>
<svg class="abs" style="left:25.6px;top:114.6px" width="6" height="9"><path d="M0.5 0.5 L5.5 4.25 L0.5 8 Z" fill="#555550"/></svg>
<svg class="abs" style="left:36.8px;top:111.1px" width="16" height="16"><path d="M1 4.5 L5.5 4.5 L6.5 3 L12.5 3 L12.5 12.5 L1 12.5 Z" fill="#e8c878" stroke="#a8883a" stroke-width="0.9"/><path d="M1.2 12.5 L3.5 7 L15 7 L12.5 12.5 Z" fill="#f8e4a4" stroke="#a8883a" stroke-width="0.9"/></svg>
<div class="t tree" style="left:54.1px;top:113.8px;transform:scaleX(1.05);transform-origin:0 0">META-INF</div>
<svg class="abs" style="left:25.6px;top:136.2px" width="6" height="9"><path d="M0.5 0.5 L5.5 4.25 L0.5 8 Z" fill="#555550"/></svg>
<svg class="abs" style="left:36.8px;top:132.7px" width="16" height="16"><path d="M1 4.5 L5.5 4.5 L6.5 3 L12.5 3 L12.5 12.5 L1 12.5 Z" fill="#e8c878" stroke="#a8883a" stroke-width="0.9"/><path d="M1.2 12.5 L3.5 7 L15 7 L12.5 12.5 Z" fill="#f8e4a4" stroke="#a8883a" stroke-width="0.9"/></svg>
<div class="t tree" style="left:54.1px;top:135.4px;transform:scaleX(1.01);transform-origin:0 0">WEB-INF</div>
<svg class="abs" style="left:36.8px;top:154.2px" width="16" height="16"><path d="M2.5 1.5 L9 1.5 L12.5 5 L12.5 14.5 L2.5 14.5 Z" fill="#f8f8f0" stroke="#8a8a70" stroke-width="0.9"/><path d="M4.5 5.5 L8 5.5 M4.5 8 L10.5 8 M4.5 10.5 L10.5 10.5" stroke="#c06060" stroke-width="0.9"/><path d="M6 8 L10.5 8 M7 12.5 L10.5 12.5" stroke="#50a070" stroke-width="0.9"/></svg>
<div class="t tree" style="left:54.1px;top:156.9px;transform:scaleX(1.22);transform-origin:0 0">index.html</div>
<svg class="abs" style="left:36.8px;top:175.8px" width="16" height="16"><path d="M2.5 1.5 L9 1.5 L12.5 5 L12.5 14.5 L2.5 14.5 Z" fill="#f8f8f0" stroke="#8a8a70" stroke-width="0.9"/><path d="M4.5 5.5 L8 5.5" stroke="#c06060" stroke-width="0.9"/><rect x="5" y="8" width="5" height="4.5" fill="#a8c8d8" stroke="#6a9ab0" stroke-width="0.7"/></svg>
<div class="t tree" style="left:54.1px;top:178.5px;transform:scaleX(1.2);transform-origin:0 0">index2.html</div>
<svg class="abs" style="left:4.0px;top:201.8px" width="8" height="6"><path d="M0.5 0.5 L7 0.5 L3.75 5.5 Z" fill="#555550"/></svg>
<svg class="abs" style="left:16.2px;top:197.3px" width="16" height="16"><path d="M1 9 L14 9 L12 14.5 L1 14.5 Z" fill="#8ab8e8" stroke="#3a6aa8" stroke-width="0.9"/><circle cx="5" cy="5" r="3.8" fill="#6aa070" stroke="#3a6a40" stroke-width="0.7"/><rect x="8" y="3" width="5" height="5" fill="#fff" stroke="#4a6a9a" stroke-width="0.8"/><path d="M14.5 1 L14.5 8 L11 9" stroke="#2a4a8a" stroke-width="1.1" fill="none"/></svg>
<div class="t tree" style="left:33.5px;top:200.0px;transform:scaleX(1.08);transform-origin:0 0">navegacionJS</div>
<svg class="abs" style="left:15.3px;top:222.4px" width="6" height="9"><path d="M0.5 0.5 L5.5 4.25 L0.5 8 Z" fill="#555550"/></svg>
<svg class="abs" style="left:26.5px;top:218.9px" width="16" height="16"><path d="M1 14 L6 5 L11 14 Z" fill="#c0d8f0" stroke="#3a5a9a" stroke-width="1"/><path d="M0.5 14.5 L12 14.5" stroke="#1a2a6a" stroke-width="1.6"/><circle cx="10" cy="5.5" r="4" fill="#6ab06a" stroke="#3a7a4a" stroke-width="0.7"/><circle cx="9" cy="4.5" r="1.8" fill="#a8e0f0"/></svg>
<div class="t tree" style="left:43.8px;top:221.6px;transform:scaleX(1.05);transform-origin:0 0">JAX-WS Web Services</div>
<svg class="abs" style="left:15.3px;top:244.0px" width="6" height="9"><path d="M0.5 0.5 L5.5 4.25 L0.5 8 Z" fill="#555550"/></svg>
<svg class="abs" style="left:26.5px;top:240.5px" width="16" height="16"><circle cx="5" cy="5" r="4" fill="#6ab06a" stroke="#3a7a4a" stroke-width="0.7"/><circle cx="4" cy="4" r="1.6" fill="#a8e0f0"/><rect x="4.5" y="7.5" width="10.5" height="7.5" fill="#fff" stroke="#333" stroke-width="1"/><path d="M6.5 11 L8 11 L8 13.5 M10 10 L13 10 L13 13.5 L10 13.5 Z" stroke="#333" stroke-width="0.9" fill="none"/></svg>
<div class="t tree" style="left:43.8px;top:243.2px;transform:scaleX(1.15);transform-origin:0 0">Deployment Descriptor: navegacionJS</div>
<svg class="abs" style="left:15.3px;top:265.5px" width="6" height="9"><path d="M0.5 0.5 L5.5 4.25 L0.5 8 Z" fill="#555550"/></svg>
<svg class="abs" style="left:26.5px;top:262.0px" width="16" height="16"><path d="M1 6 L5 6 L6 4.5 L13 4.5 L13 14 L1 14 Z" fill="#e8c878" stroke="#a8883a" stroke-width="0.8"/><path d="M1.2 14 L3.5 8.5 L15.5 8.5 L13 14 Z" fill="#f8e0a0" stroke="#a8883a" stroke-width="0.8"/><rect x="6" y="3" width="7" height="2" fill="#5a4a30"/><rect x="6" y="6" width="7" height="1.5" fill="#6a5a40"/><circle cx="4.5" cy="4" r="3.2" fill="#70b070" stroke="#3a7a4a" stroke-width="0.6"/><circle cx="3.8" cy="3.2" r="1.4" fill="#c0e8f0"/></svg>
<div class="t tree" style="left:43.8px;top:264.7px;transform:scaleX(1.064);transform-origin:0 0">Java Resources</div>
<svg class="abs" style="left:15.3px;top:287.1px" width="6" height="9"><path d="M0.5 0.5 L5.5 4.25 L0.5 8 Z" fill="#555550"/></svg>
<svg class="abs" style="left:26.5px;top:283.6px" width="16" height="16"><rect x="1" y="11" width="14" height="3.5" fill="#3a8a40" stroke="#1a5a20" stroke-width="0.6"/><rect x="1.5" y="7.5" width="12" height="3.5" fill="#2a4a9a" stroke="#1a2a6a" stroke-width="0.6"/><path d="M9 7.5 L11.5 1.5 L14.5 7.5 Z" fill="#f0c840" stroke="#907010" stroke-width="0.6"/><rect x="2" y="5" width="6" height="2.5" fill="#e0c060" stroke="#806020" stroke-width="0.5"/></svg>
<div class="t tree" style="left:43.8px;top:286.3px;transform:scaleX(1.09);transform-origin:0 0">JavaScript Resources</div>
<svg class="abs" style="left:15.3px;top:308.6px" width="6" height="9"><path d="M0.5 0.5 L5.5 4.25 L0.5 8 Z" fill="#555550"/></svg>
<svg class="abs" style="left:26.5px;top:305.1px" width="16" height="16"><path d="M1 4.5 L5.5 4.5 L6.5 3 L12.5 3 L12.5 12.5 L1 12.5 Z" fill="#e8c878" stroke="#a8883a" stroke-width="0.9"/><path d="M1.2 12.5 L3.5 7 L15 7 L12.5 12.5 Z" fill="#f8e4a4" stroke="#a8883a" stroke-width="0.9"/></svg>
<div class="t tree" style="left:43.8px;top:307.8px;transform:scaleX(1.2);transform-origin:0 0">build</div>
<svg class="abs" style="left:14.3px;top:331.2px" width="8" height="6"><path d="M0.5 0.5 L7 0.5 L3.75 5.5 Z" fill="#555550"/></svg>
<svg class="abs" style="left:26.5px;top:326.7px" width="16" height="16"><path d="M1 4.5 L5.5 4.5 L6.5 3 L12.5 3 L12.5 12.5 L1 12.5 Z" fill="#e8c878" stroke="#a8883a" stroke-width="0.9"/><path d="M1.2 12.5 L3.5 7 L15 7 L12.5 12.5 Z" fill="#f8e4a4" stroke="#a8883a" stroke-width="0.9"/></svg>
<div class="t tree" style="left:43.8px;top:329.4px;transform:scaleX(1.146);transform-origin:0 0">WebContent</div>
<svg class="abs" style="left:24.6px;top:352.8px" width="8" height="6"><path d="M0.5 0.5 L7 0.5 L3.75 5.5 Z" fill="#555550"/></svg>
<svg class="abs" style="left:36.8px;top:348.3px" width="16" height="16"><path d="M1 4.5 L5.5 4.5 L6.5 3 L12.5 3 L12.5 12.5 L1 12.5 Z" fill="#e8c878" stroke="#a8883a" stroke-width="0.9"/><path d="M1.2 12.5 L3.5 7 L15 7 L12.5 12.5 Z" fill="#f8e4a4" stroke="#a8883a" stroke-width="0.9"/></svg>
<div class="t tree" style="left:54.1px;top:351.0px;transform:scaleX(1.2);transform-origin:0 0">lib</div>
<svg class="abs" style="left:35.9px;top:373.3px" width="6" height="9"><path d="M0.5 0.5 L5.5 4.25 L0.5 8 Z" fill="#555550"/></svg>
<svg class="abs" style="left:47.1px;top:369.8px" width="16" height="16"><path d="M2.5 1.5 L9 1.5 L12.5 5 L12.5 14.5 L2.5 14.5 Z" fill="#fbfbf0" stroke="#7a7a60" stroke-width="0.9"/><path d="M9 1.5 L9 5 L12.5 5" fill="none" stroke="#7a7a60" stroke-width="0.8"/><path d="M6 4.5 L6 9 Q6 10.5 4.5 10" stroke="#2a5ab0" stroke-width="1.1" fill="none"/><path d="M10.5 8.5 Q8 7.5 7.5 9.5 Q8 11 10 11 Q11 12.5 8 13" stroke="#2a5ab0" stroke-width="1.1" fill="none"/></svg>
<div class="t tree" style="left:64.4px;top:372.5px;transform:scaleX(1.107);transform-origin:0 0">jquery-2.1.3.min.js</div>
<svg class="abs" style="left:25.6px;top:394.9px" width="6" height="9"><path d="M0.5 0.5 L5.5 4.25 L0.5 8 Z" fill="#555550"/></svg>
<svg class="abs" style="left:36.8px;top:391.4px" width="16" height="16"><path d="M1 4.5 L5.5 4.5 L6.5 3 L12.5 3 L12.5 12.5 L1 12.5 Z" fill="#e8c878" stroke="#a8883a" stroke-width="0.9"/><path d="M1.2 12.5 L3.5 7 L15 7 L12.5 12.5 Z" fill="#f8e4a4" stroke="#a8883a" stroke-width="0.9"/></svg>
<div class="t tree" style="left:54.1px;top:394.1px;transform:scaleX(1.05);transform-origin:0 0">META-INF</div>
<svg class="abs" style="left:25.6px;top:416.4px" width="6" height="9"><path d="M0.5 0.5 L5.5 4.25 L0.5 8 Z" fill="#555550"/></svg>
<svg class="abs" style="left:36.8px;top:412.9px" width="16" height="16"><path d="M1 4.5 L5.5 4.5 L6.5 3 L12.5 3 L12.5 12.5 L1 12.5 Z" fill="#e8c878" stroke="#a8883a" stroke-width="0.9"/><path d="M1.2 12.5 L3.5 7 L15 7 L12.5 12.5 Z" fill="#f8e4a4" stroke="#a8883a" stroke-width="0.9"/></svg>
<div class="t tree" style="left:54.1px;top:415.6px;transform:scaleX(1.01);transform-origin:0 0">WEB-INF</div>
<svg class="abs" style="left:36.8px;top:434.5px" width="16" height="16"><path d="M2.5 1.5 L9 1.5 L12.5 5 L12.5 14.5 L2.5 14.5 Z" fill="#f8f8f0" stroke="#8a8a70" stroke-width="0.9"/><path d="M4.5 5.5 L8 5.5 M4.5 8 L10.5 8 M4.5 10.5 L10.5 10.5" stroke="#c06060" stroke-width="0.9"/><path d="M6 8 L10.5 8 M7 12.5 L10.5 12.5" stroke="#50a070" stroke-width="0.9"/></svg>
<div class="t tree" style="left:54.1px;top:437.2px;transform:scaleX(1.22);transform-origin:0 0">index.html</div>
</div>
<div class="abs" style="left:357.5px;top:200.5px;width:13px;height:448px;border:1px solid #bdbdb9;border-radius:6px;background:#fafaf8"></div>
<div class="abs" style="left:358.5px;top:213px;width:11px;height:422px;background:#d8d8d4"></div>
<div class="abs" style="left:358px;top:338px;width:12px;height:284px;border:1px solid #b0b0ac;border-radius:6px;background:linear-gradient(90deg,#f6f6f4,#ececea)"></div>
<svg class="abs" style="left:360px;top:205px" width="8" height="5" viewBox="0 0 8 5"><path d="M0.5 4.5 L4 0.5 L7.5 4.5 Z" fill="#4a4a48"/></svg>
<svg class="abs" style="left:361px;top:477px" width="6" height="6" viewBox="0 0 6 6"><path d="M0 1 L6 1 M0 3 L6 3 M0 5 L6 5" stroke="#b8b8b4" stroke-width="0.8"/></svg>
<svg class="abs" style="left:360px;top:639px" width="8" height="5" viewBox="0 0 8 5"><path d="M0.5 0.5 L4 4.5 L7.5 0.5 Z" fill="#6a6a68"/></svg>
<div class="abs" style="left:165.5px;top:651.5px;width:189px;height:12px;border:1px solid #bdbdb9;border-radius:6px;background:#dcdcd8"></div>
<div class="abs" style="left:177.5px;top:651.5px;width:102px;height:12px;border:1px solid #b0b0ac;border-radius:6px;background:linear-gradient(#f6f6f4,#e8e8e4)"></div>
<div class="abs" style="left:166.5px;top:652.5px;width:11px;height:10px;background:#fafaf8;border-radius:5px 0 0 5px"></div>
<div class="abs" style="left:342.5px;top:652.5px;width:11px;height:10px;background:#fafaf8;border-radius:0 5px 5px 0"></div>
<div class="abs" style="left:177.5px;top:651.5px;width:102px;height:12px;border:1px solid #b0b0ac;border-radius:6px;background:linear-gradient(#f6f6f4,#e8e8e4)"></div>
<svg class="abs" style="left:171px;top:654px" width="5" height="8" viewBox="0 0 5 8"><path d="M4.5 0.5 L0.5 4 L4.5 7.5 Z" fill="#888"/></svg>
<svg class="abs" style="left:345px;top:654px" width="5" height="8" viewBox="0 0 5 8"><path d="M0.5 0.5 L4.5 4 L0.5 7.5 Z" fill="#666"/></svg>
<svg class="abs" style="left:226px;top:655px" width="6" height="5" viewBox="0 0 6 5"><path d="M1 0 L1 5 M3 0 L3 5 M5 0 L5 5" stroke="#b8b8b4" stroke-width="0.8"/></svg>
<div class="abs" style="left:377px;top:141px;width:702.5px;height:525.5px;background:#fdfdfa;border:1px solid #e0e0dc;border-radius:5px 5px 4px 4px"></div>
<div class="abs" style="left:496.5px;top:141px;width:583px;height:29px;background:#dcdcd8;border-radius:0 5px 0 0"></div>
<div class="abs" style="left:377px;top:141px;width:119.5px;height:29px;background:#fdfdfa;border-radius:5px 5px 0 0"></div>
<svg class="abs" style="left:381px;top:147px" width="16" height="16" viewBox="0 0 16 16"><path d="M2.5 1.5 L9.5 1.5 L12.5 4.5 L12.5 14.5 L2.5 14.5 Z" fill="#f4f4ea" stroke="#7a7a60" stroke-width="0.9"/><path d="M4.5 4 L8 4" stroke="#c06060" stroke-width="0.9"/><rect x="5" y="7.5" width="5.5" height="5" fill="#a8c8d8" stroke="#6a9ab0" stroke-width="0.7"/></svg>
<div class="t " style="left:400.3px;top:149.2px;transform:scaleX(1.15);transform-origin:0 0;font-size:13px;color:#1c1c1c">*index.html</div>
<svg class="abs" style="left:479.8px;top:150.5px" width="11" height="10" viewBox="0 0 11 10"><path d="M1 1 L10 9 M10 1 L1 9" stroke="#333" stroke-width="2.6"/><path d="M1 1 L10 9 M10 1 L1 9" stroke="#fff" stroke-width="1"/></svg>
<svg class="abs" style="left:1027px;top:150.5px" width="10" height="5" viewBox="0 0 10 5"><rect x="0.75" y="0.75" width="8.5" height="3.5" rx="1" fill="#fff" stroke="#333" stroke-width="1.3"/></svg>
<svg class="abs" style="left:1053px;top:150.5px" width="10" height="10" viewBox="0 0 10 10"><rect x="0.75" y="0.75" width="8.5" height="8.5" fill="#fff" stroke="#333" stroke-width="1.3"/><path d="M1 2.8 L9 2.8" stroke="#333" stroke-width="1"/></svg>
<div class="abs" style="left:379px;top:170px;width:12px;height:478px;background:#f2f2ee"></div>
<div class="abs" style="left:414.5px;top:170px;width:1px;height:478px;background:#f0f0ec"></div>
<div class="abs" style="left:1064.5px;top:170px;width:14px;height:492px;background:linear-gradient(90deg,#f6f6f2,#eeeeea)"></div>
<div class="abs" style="left:416.5px;top:364.2px;width:633.5px;height:15.2px;background:#e6f0fa"></div>
<div class="abs" style="left:391px;top:284.0px;width:15px;height:94.8px;background:linear-gradient(#e8dcea,#e2e2ec 35%,#e2e2ec)"></div>
<div class="abs" style="left:379.5px;top:332.1px;width:11.5px;height:46.9px;background:repeating-conic-gradient(#d08460 0 25%,#eec4ac 0 50%) 0 0/2px 2px;border-top:1px solid #d06838"></div>
<div class="t code" style="left:416.8px;top:173.70px"><span style="color:#3f7f7f">&lt;!DOCTYPE html&gt;</span></div>
<div class="t ln" style="left:398.8px;top:173.70px">1</div>
<div class="t code" style="left:416.8px;top:189.60px"><span style="color:#3f7f7f">&lt;html&gt;</span></div>
<div class="t ln" style="left:398.8px;top:189.60px">2</div>
<div class="t code" style="left:416.8px;top:205.50px">    <span style="color:#3f7f7f">&lt;head&gt;</span></div>
<div class="t ln" style="left:398.8px;top:205.50px">3</div>
<div class="t code" style="left:416.8px;top:221.40px">        <span style="color:#3f7f7f">&lt;meta </span><span style="color:#7a207a">charset</span><span style="color:#3f6060">=</span><span style="color:#3418d8;font-style:italic">"UTF-8"</span><span style="color:#3f7f7f">&gt;</span></div>
<div class="t ln" style="left:398.8px;top:221.40px">4</div>
<div class="t code" style="left:416.8px;top:237.30px">        <span style="color:#3f7f7f">&lt;title&gt;</span><span style="color:#1a1a1a">Insert title here</span><span style="color:#3f7f7f">&lt;/title&gt;</span></div>
<div class="t ln" style="left:398.8px;top:237.30px">5</div>
<div class="t code" style="left:416.8px;top:253.20px">    <span style="color:#3f7f7f">&lt;/head&gt;</span></div>
<div class="t ln" style="left:398.8px;top:253.20px">6</div>
<div class="t code" style="left:416.8px;top:269.10px">    <span style="color:#3f7f7f">&lt;body&gt;</span></div>
<div class="t ln" style="left:398.8px;top:269.10px">7</div>
<div class="t code" style="left:416.8px;top:285.00px">        <span style="color:#3f7f7f">&lt;div </span><span style="color:#7a207a">class</span><span style="color:#3f6060">=</span><span style="color:#3418d8;font-style:italic">"pagina"</span><span style="color:#3f7f7f">&gt;</span></div>
<div class="t ln" style="left:398.8px;top:285.00px">8</div>
<div class="t code" style="left:416.8px;top:300.90px"></div>
<div class="t ln" style="left:398.8px;top:300.90px">9</div>
<div class="t code" style="left:416.8px;top:316.80px">        <span style="color:#3f7f7f">&lt;/div&gt;</span></div>
<div class="t ln" style="left:391.3px;top:316.80px">10</div>
<div class="t code" style="left:416.8px;top:332.70px">        <span style="color:#3f7f7f">&lt;</span><span style="color:#3f7f7f;background:#d4d4d4">div</span><span style="color:#3f7f7f"> </span><span style="color:#7a207a">class</span><span style="color:#3f6060">=</span><span style="color:#3418d8">""</span><span style="color:#3f7f7f">&gt;</span></div>
<div class="t ln" style="left:391.3px;top:332.70px">11</div>
<div class="t code" style="left:416.8px;top:348.60px"></div>
<div class="t ln" style="left:391.3px;top:348.60px">12</div>
<div class="t code" style="left:416.8px;top:364.50px">        <span style="color:#3f7f7f">&lt;/</span><span style="color:#3f7f7f;background:#d4d4d4">div</span><span style="color:#3f7f7f;outline:1px solid #c8c8c8;outline-offset:-1px">&gt;</span></div>
<div class="t ln" style="left:391.3px;top:364.50px">13</div>
<div class="t code" style="left:416.8px;top:380.40px">    <span style="color:#3f7f7f">&lt;/body&gt;</span></div>
<div class="t ln" style="left:391.3px;top:380.40px">14</div>
<div class="t code" style="left:416.8px;top:396.30px"><span style="color:#3f7f7f">&lt;/html&gt;</span></div>
<div class="t ln" style="left:391.3px;top:396.30px">15</div>
<svg class="abs" style="left:405.5px;top:192.1px" width="8" height="8" viewBox="0 0 8 8"><circle cx="4" cy="4" r="3.4" fill="#f4f4f4" stroke="#a8a8a8" stroke-width="0.9"/><path d="M2 4 L6 4" stroke="#666" stroke-width="0.9"/></svg>
<svg class="abs" style="left:405.5px;top:208.0px" width="8" height="8" viewBox="0 0 8 8"><circle cx="4" cy="4" r="3.4" fill="#f4f4f4" stroke="#a8a8a8" stroke-width="0.9"/><path d="M2 4 L6 4" stroke="#666" stroke-width="0.9"/></svg>
<svg class="abs" style="left:405.5px;top:271.6px" width="8" height="8" viewBox="0 0 8 8"><circle cx="4" cy="4" r="3.4" fill="#f4f4f4" stroke="#a8a8a8" stroke-width="0.9"/><path d="M2 4 L6 4" stroke="#666" stroke-width="0.9"/></svg>
<svg class="abs" style="left:405.5px;top:287.5px" width="8" height="8" viewBox="0 0 8 8"><circle cx="4" cy="4" r="3.4" fill="#f4f4f4" stroke="#a8a8a8" stroke-width="0.9"/><path d="M2 4 L6 4" stroke="#666" stroke-width="0.9"/></svg>
<div class="abs" style="left:477px;top:364.8px;width:1.3px;height:14px;background:#000"></div>
<svg class="abs" style="left:522px;top:285.8px" width="10" height="18" viewBox="0 0 10 18"><path d="M2 1.8 L8 1.8 M5 2 L5 15 M2 15.5 L8 15.5" stroke="#111" stroke-width="3.4" stroke-linecap="round" fill="none"/><path d="M2.6 1.8 L7.4 1.8 M5 2.5 L5 14.8 M2.6 15.5 L7.4 15.5" stroke="#e8e8ec" stroke-width="1.2" fill="none"/></svg>
<div class="abs" style="left:1066.5px;top:337.5px;width:9px;height:4px;border:1px solid #d8d8d4;background:#f4f4f0"></div>
<div class="abs" style="left:1066.5px;top:353px;width:9px;height:4px;border:1px solid #d8d8d4;background:#f4f4f0"></div>
<div class="abs" style="left:1052px;top:172.5px;width:13px;height:476px;border:1px solid #bdbdb9;border-radius:6px;background:#fafaf8"></div>
<div class="abs" style="left:1052px;top:185px;width:13px;height:451px;border:1px solid #bcbcb8;border-radius:6px;background:linear-gradient(90deg,#f8f8f6,#e8e8e4)"></div>
<svg class="abs" style="left:1054.5px;top:177px" width="8" height="5" viewBox="0 0 8 5"><path d="M0.5 4.5 L4 0.5 L7.5 4.5 Z" fill="#8a8a88"/></svg>
<svg class="abs" style="left:1054.5px;top:639px" width="8" height="5" viewBox="0 0 8 5"><path d="M0.5 0.5 L4 4.5 L7.5 0.5 Z" fill="#8a8a88"/></svg>
<svg class="abs" style="left:1055px;top:406px" width="7" height="8" viewBox="0 0 7 8"><path d="M0 1.5 L7 1.5 M0 4 L7 4 M0 6.5 L7 6.5" stroke="#c8c8c4" stroke-width="1"/></svg>
<div class="abs" style="left:415px;top:651.5px;width:634px;height:12px;border:1px solid #bdbdb9;border-radius:6px;background:#fafaf8"></div>
<div class="abs" style="left:427.5px;top:651.5px;width:609px;height:12px;border:1px solid #bcbcb8;border-radius:6px;background:linear-gradient(#f8f8f6,#e8e8e4)"></div>
<svg class="abs" style="left:419px;top:654px" width="5" height="8" viewBox="0 0 5 8"><path d="M4.5 0.5 L0.5 4 L4.5 7.5 Z" fill="#8a8a88"/></svg>
<svg class="abs" style="left:1040.5px;top:654px" width="5" height="8" viewBox="0 0 5 8"><path d="M0.5 0.5 L4.5 4 L0.5 7.5 Z" fill="#8a8a88"/></svg>
<svg class="abs" style="left:727px;top:655px" width="6" height="5" viewBox="0 0 6 5"><path d="M1 0 L1 5 M3 0 L3 5 M5 0 L5 5" stroke="#b8b8b4" stroke-width="0.8"/></svg>
<div class="abs" style="left:1082.8px;top:140.5px;width:36.2px;height:66.0px;border:1px solid #cdcdc9;border-bottom-color:#b8b8b4;border-radius:5px;background:linear-gradient(90deg,#e8e8e4,#e2e2de)"></div>
<svg class="abs" style="left:1091px;top:145.5px" width="21" height="3" viewBox="0 0 21 3"><rect x="0.0" y="0.5" width="3" height="1.6" fill="#9a9a96"/><rect x="5.3" y="0.5" width="3" height="1.6" fill="#9a9a96"/><rect x="10.6" y="0.5" width="3" height="1.6" fill="#9a9a96"/><rect x="15.899999999999999" y="0.5" width="3" height="1.6" fill="#9a9a96"/></svg>
<svg class="abs" style="left:1097px;top:159px" width="9" height="8" viewBox="0 0 9 8"><rect x="2.8" y="0.5" width="5.5" height="3.6" fill="#fff" stroke="#444" stroke-width="0.9"/><rect x="0.5" y="3.2" width="5.8" height="4.2" fill="#fff" stroke="#444" stroke-width="0.9"/></svg>
<svg class="abs" style="left:1093px;top:181px" width="16" height="16" viewBox="0 0 16 16"><circle cx="8" cy="8" r="7" fill="#f0f4f0" stroke="#5a6a6a" stroke-width="0.9"/><circle cx="9" cy="5" r="2.6" fill="#3aa8e0"/><circle cx="5" cy="9.5" r="2.6" fill="#e8d040"/><circle cx="10.5" cy="10.5" r="2.6" fill="#30b040"/></svg>
<div class="abs" style="left:1082.8px;top:209px;width:36.2px;height:92.69999999999999px;border:1px solid #cdcdc9;border-bottom-color:#b8b8b4;border-radius:5px;background:linear-gradient(90deg,#e8e8e4,#e2e2de)"></div>
<svg class="abs" style="left:1091px;top:214px" width="21" height="3" viewBox="0 0 21 3"><rect x="0.0" y="0.5" width="3" height="1.6" fill="#9a9a96"/><rect x="5.3" y="0.5" width="3" height="1.6" fill="#9a9a96"/><rect x="10.6" y="0.5" width="3" height="1.6" fill="#9a9a96"/><rect x="15.899999999999999" y="0.5" width="3" height="1.6" fill="#9a9a96"/></svg>
<svg class="abs" style="left:1097px;top:227.3px" width="9" height="8" viewBox="0 0 9 8"><rect x="2.8" y="0.5" width="5.5" height="3.6" fill="#fff" stroke="#444" stroke-width="0.9"/><rect x="0.5" y="3.2" width="5.8" height="4.2" fill="#fff" stroke="#444" stroke-width="0.9"/></svg>
<svg class="abs" style="left:1093px;top:250px" width="16" height="16" viewBox="0 0 16 16"><rect x="1.5" y="1.5" width="5" height="5" fill="#a8d0f0" stroke="#3a88d0"/><rect x="1.5" y="9.5" width="5" height="5" fill="#a8d0f0" stroke="#3a88d0"/><rect x="8" y="7" width="3" height="3" fill="#3a78b0"/><path d="M8 4 L14 4 M12 8.5 L15 8.5 M8 12 L14 12" stroke="#4a7aa8" stroke-width="1"/></svg>
<svg class="abs" style="left:1093px;top:276px" width="16" height="16" viewBox="0 0 16 16"><path d="M2.5 1.5 L13.5 1.5 L13.5 14.5 L8 12.5 L2.5 14.5 Z" fill="#e8e8f4" stroke="#5a5a80" stroke-width="0.9"/><path d="M4.5 4 L11.5 4 M4.5 6 L11.5 6 M4.5 8 L11.5 8 M4.5 10 L11.5 10" stroke="#6a6a90" stroke-width="0.8"/></svg>
<div class="abs" style="left:1082.8px;top:303.3px;width:36.2px;height:224.40000000000003px;border:1px solid #cdcdc9;border-bottom-color:#b8b8b4;border-radius:5px;background:linear-gradient(90deg,#e8e8e4,#e2e2de)"></div>
<svg class="abs" style="left:1091px;top:308.3px" width="21" height="3" viewBox="0 0 21 3"><rect x="0.0" y="0.5" width="3" height="1.6" fill="#9a9a96"/><rect x="5.3" y="0.5" width="3" height="1.6" fill="#9a9a96"/><rect x="10.6" y="0.5" width="3" height="1.6" fill="#9a9a96"/><rect x="15.899999999999999" y="0.5" width="3" height="1.6" fill="#9a9a96"/></svg>
<svg class="abs" style="left:1097px;top:322px" width="9" height="8" viewBox="0 0 9 8"><rect x="2.8" y="0.5" width="5.5" height="3.6" fill="#fff" stroke="#444" stroke-width="0.9"/><rect x="0.5" y="3.2" width="5.8" height="4.2" fill="#fff" stroke="#444" stroke-width="0.9"/></svg>
<svg class="abs" style="left:1093px;top:344px" width="16" height="16" viewBox="0 0 16 16"><path d="M2.5 1.5 L12 1.5 L14 6 L12 14.5 L2.5 14.5 Z" fill="#f8f0e8" stroke="#7a6a8a" stroke-width="0.9"/><circle cx="6.5" cy="6.5" r="2.4" fill="#d83030"/><circle cx="6.5" cy="11.5" r="2.4" fill="#f0b030"/></svg>
<svg class="abs" style="left:1093px;top:370px" width="16" height="16" viewBox="0 0 16 16"><rect x="1.5" y="2.5" width="13" height="11" fill="#f4f8fc" stroke="#4a6a8a" stroke-width="0.9"/><rect x="2" y="3" width="12" height="2.5" fill="#7aa8d8"/><path d="M2 8 L14 8 M2 10.5 L14 10.5" stroke="#9ab0c8" stroke-width="0.7"/><path d="M5.5 5.5 L5.5 13.5" stroke="#9ab0c8" stroke-width="0.7"/></svg>
<svg class="abs" style="left:1093px;top:396px" width="16" height="16" viewBox="0 0 16 16"><path d="M4 1 L4 15 M8 1 L8 15 M12 1 L12 15" stroke="#506070" stroke-width="1"/><circle cx="4" cy="10" r="2.2" fill="#40a040"/><circle cx="8" cy="5" r="2.2" fill="#e0a020"/><circle cx="12" cy="10" r="2.2" fill="#3070c0"/></svg>
<svg class="abs" style="left:1093px;top:421px" width="16" height="16" viewBox="0 0 16 16"><path d="M1 2 L5 1 L9 3 L13 2 L13 14 L9 15 L5 13 L1 14 Z" fill="#88c050" stroke="#4a7a20" stroke-width="0.8"/><path d="M5 1 L5 13 M9 3 L9 15" stroke="#4a7a20" stroke-width="0.8"/><rect x="10" y="7" width="5.5" height="8" fill="#f0f0e0" stroke="#606040" stroke-width="0.7"/></svg>
<svg class="abs" style="left:1093px;top:448px" width="16" height="16" viewBox="0 0 16 16"><path d="M2.5 1.5 L9 1.5 L12 4.5 L12 8" fill="#f8f8f8" stroke="#707070" stroke-width="0.8"/><rect x="2.5" y="1.5" width="6" height="7" fill="#f4f4f4" stroke="#707070" stroke-width="0.8"/><rect x="4.5" y="7.5" width="10.5" height="7" fill="#d8e8f4" stroke="#4a7aa8" stroke-width="0.9"/><path d="M6 10 L12 10 M6 12 L11 12" stroke="#4a7aa8" stroke-width="0.8"/></svg>
<svg class="abs" style="left:1093px;top:475px" width="16" height="16" viewBox="0 0 16 16"><rect x="1.5" y="1.5" width="13" height="10" rx="1" fill="#4a90d0" stroke="#1a4a8a" stroke-width="0.9"/><rect x="3" y="3" width="10" height="7" fill="#e0f0fc"/><path d="M4.5 5 L11.5 5 M4.5 7.5 L10 7.5" stroke="#1a4a8a" stroke-width="0.9"/><path d="M5 13.5 L11 13.5" stroke="#1a4a8a" stroke-width="1.4"/></svg>
<svg class="abs" style="left:1093px;top:500px" width="16" height="16" viewBox="0 0 16 16"><path d="M5.5 3.5 L12.5 3.5 L14.5 5.5 L14.5 15 L5.5 15 Z" fill="#f8f4e0" stroke="#8a8060" stroke-width="0.8"/><circle cx="6" cy="7" r="5" fill="#e02828" stroke="#a01010" stroke-width="0.7"/><path d="M4 5 L8 9 M8 5 L4 9" stroke="#fff" stroke-width="1.4"/></svg>
<svg class="abs" style="left:163px;top:676px" width="14" height="10" viewBox="0 0 14 10"><path d="M5 1.5 L1.5 5 L5 8.5 M9 1.5 L12.5 5 L9 8.5" stroke="#5a8ab8" stroke-width="1.3" fill="none"/></svg>
<div class="t st" style="left:182.3px;top:675px;transform:scaleX(1.2);transform-origin:0 0;">html/body/div</div>
<div class="abs" style="left:499.3px;top:670px;width:1px;height:24px;background:#d0d0cc"></div>
<div class="abs" style="left:611.8px;top:670px;width:1px;height:24px;background:#d0d0cc"></div>
<div class="abs" style="left:717.4px;top:670px;width:1px;height:24px;background:#d0d0cc"></div>
<div class="t st" style="left:507px;top:675px;transform:scaleX(1.18);transform-origin:0 0;">Writable</div>
<div class="t st" style="left:619px;top:675px;transform:scaleX(1.1);transform-origin:0 0;">Smart Insert</div>
<div class="t st" style="left:723.8px;top:675px;transform:scaleX(0.98);transform-origin:0 0;">13 : 9</div>
<svg class="abs" style="left:819.8000000000001px;top:675.5px" width="2" height="19" viewBox="0 0 2 19"><rect x="0" y="0.0" width="1.6" height="2.2" rx="0.6" fill="#8a8a86"/><rect x="0" y="5.6" width="1.6" height="2.2" rx="0.6" fill="#8a8a86"/><rect x="0" y="11.2" width="1.6" height="2.2" rx="0.6" fill="#8a8a86"/><rect x="0" y="16.8" width="1.6" height="2.2" rx="0.6" fill="#8a8a86"/></svg>
<svg class="abs" style="left:167px;top:702px" width="15" height="13" viewBox="0 0 15 13"><rect x="0.5" y="0.5" width="14" height="2.5" fill="#f0e8f0"/><rect x="0.5" y="3.5" width="14" height="9" rx="1" fill="#a040b0"/><rect x="2" y="5.5" width="2.5" height="2" fill="#f0d8f0"/><rect x="2" y="9" width="2.5" height="2" fill="#f0d8f0"/></svg>
<div class="abs" style="left:187px;top:697px;width:1px;height:23px;background:#2a2a26"></div>
<svg class="abs" style="left:208.5px;top:702px" width="14" height="14" viewBox="0 0 14 14"><rect x="0.5" y="0.5" width="13" height="13" rx="1.5" fill="#8a8884" stroke="#4a4844" stroke-width="0.8"/><rect x="2" y="2" width="10" height="3" fill="#c89060"/><rect x="2" y="7" width="10" height="5" fill="#6a6864"/><rect x="5" y="9" width="4" height="1" fill="#aaa"/></svg>
<div class="t tk" style="left:230.3px;top:703.2px;transform:scaleX(1.13);transform-origin:0 0;">[eclipse]</div>
<div class="abs" style="left:390px;top:697.5px;width:191px;height:22.5px;background:linear-gradient(#34342e,#2c2c27)"></div>
<svg class="abs" style="left:400.5px;top:701px" width="16" height="16" viewBox="0 0 16 16"><rect x="0" y="0" width="16" height="16" fill="#5a3a8a"/><rect x="6.8" y="0.5" width="2.4" height="3" fill="#fff" transform="rotate(0 8.0 8.0)"/><rect x="6.8" y="0.5" width="2.4" height="3" fill="#fff" transform="rotate(30 8.0 8.0)"/><rect x="6.8" y="0.5" width="2.4" height="3" fill="#fff" transform="rotate(60 8.0 8.0)"/><rect x="6.8" y="0.5" width="2.4" height="3" fill="#fff" transform="rotate(90 8.0 8.0)"/><rect x="6.8" y="0.5" width="2.4" height="3" fill="#fff" transform="rotate(120 8.0 8.0)"/><rect x="6.8" y="0.5" width="2.4" height="3" fill="#fff" transform="rotate(150 8.0 8.0)"/><rect x="6.8" y="0.5" width="2.4" height="3" fill="#fff" transform="rotate(180 8.0 8.0)"/><rect x="6.8" y="0.5" width="2.4" height="3" fill="#fff" transform="rotate(210 8.0 8.0)"/><rect x="6.8" y="0.5" width="2.4" height="3" fill="#fff" transform="rotate(240 8.0 8.0)"/><rect x="6.8" y="0.5" width="2.4" height="3" fill="#fff" transform="rotate(270 8.0 8.0)"/><rect x="6.8" y="0.5" width="2.4" height="3" fill="#fff" transform="rotate(300 8.0 8.0)"/><rect x="6.8" y="0.5" width="2.4" height="3" fill="#fff" transform="rotate(330 8.0 8.0)"/><circle cx="8.0" cy="8.0" r="5.5" fill="#fff"/><circle cx="8.0" cy="8.0" r="4.0" fill="#3a3050"/><path d="M4.5 8.0 L11.5 8.0" stroke="#7a70a0" stroke-width="1"/></svg>
<div class="t tk" style="left:423.5px;top:703.2px;transform:scaleX(1.012);transform-origin:0 0;">Java EE - navegacionJ...</div>
<svg class="abs" style="left:593px;top:702px" width="14" height="14" viewBox="0 0 14 14"><rect x="0.5" y="0.5" width="13" height="13" rx="1.5" fill="#8a8884" stroke="#4a4844" stroke-width="0.8"/><rect x="2" y="2" width="10" height="3" fill="#c89060"/><rect x="2" y="7" width="10" height="5" fill="#6a6864"/><rect x="5" y="9" width="4" height="1" fill="#aaa"/></svg>
<div class="t tk" style="left:614.5px;top:703.2px;transform:scaleX(1.1);transform-origin:0 0;">[04-JavaScript]</div>
<div class="abs" style="left:773.4px;top:697px;width:1px;height:23px;background:#2a2a26"></div>
<svg class="abs" style="left:785px;top:702px" width="15" height="15" viewBox="0 0 15 15"><circle cx="7.5" cy="7.5" r="7" fill="#2d9a47"/><path d="M7.5 7.5 L1.4 4 A7 7 0 0 1 13.6 4 Z" fill="#db3a2b"/><path d="M7.5 7.5 L13.6 4 A7 7 0 0 1 7.5 14.5 Z" fill="#f2c32b"/><circle cx="7.5" cy="7.5" r="3.4" fill="#fff"/><circle cx="7.5" cy="7.5" r="2.5" fill="#3b7de0"/></svg>
<div class="t tk" style="left:806.5px;top:703.2px;transform:scaleX(1.08);transform-origin:0 0;">[Download jQuery | jQ...</div>
<div class="abs" style="left:966.7px;top:697px;width:1px;height:23px;background:#2a2a26"></div>
<div class="abs" style="left:1007px;top:699px;width:28px;height:21px;background:#e49a7a;border:1px solid #f4c4aa"></div>
<svg class="abs" style="left:1013px;top:701.5px" width="16" height="16" viewBox="0 0 16 16"><rect x="0" y="0" width="16" height="16" fill="#5a3a8a"/><rect x="6.8" y="0.5" width="2.4" height="3" fill="#fff" transform="rotate(0 8.0 8.0)"/><rect x="6.8" y="0.5" width="2.4" height="3" fill="#fff" transform="rotate(30 8.0 8.0)"/><rect x="6.8" y="0.5" width="2.4" height="3" fill="#fff" transform="rotate(60 8.0 8.0)"/><rect x="6.8" y="0.5" width="2.4" height="3" fill="#fff" transform="rotate(90 8.0 8.0)"/><rect x="6.8" y="0.5" width="2.4" height="3" fill="#fff" transform="rotate(120 8.0 8.0)"/><rect x="6.8" y="0.5" width="2.4" height="3" fill="#fff" transform="rotate(150 8.0 8.0)"/><rect x="6.8" y="0.5" width="2.4" height="3" fill="#fff" transform="rotate(180 8.0 8.0)"/><rect x="6.8" y="0.5" width="2.4" height="3" fill="#fff" transform="rotate(210 8.0 8.0)"/><rect x="6.8" y="0.5" width="2.4" height="3" fill="#fff" transform="rotate(240 8.0 8.0)"/><rect x="6.8" y="0.5" width="2.4" height="3" fill="#fff" transform="rotate(270 8.0 8.0)"/><rect x="6.8" y="0.5" width="2.4" height="3" fill="#fff" transform="rotate(300 8.0 8.0)"/><rect x="6.8" y="0.5" width="2.4" height="3" fill="#fff" transform="rotate(330 8.0 8.0)"/><circle cx="8.0" cy="8.0" r="5.5" fill="#fff"/><circle cx="8.0" cy="8.0" r="4.0" fill="#3a3050"/><path d="M4.5 8.0 L11.5 8.0" stroke="#7a70a0" stroke-width="1"/></svg>
<div class="abs" style="left:1035px;top:697.5px;width:85px;height:22.5px;background:#2e2d29"></div>
<div class="abs" style="left:1063px;top:698px;width:1px;height:22px;background:#3e3d39"></div>
<div class="abs" style="left:1091.2px;top:698px;width:1px;height:22px;background:#3e3d39"></div>
</body></html>
